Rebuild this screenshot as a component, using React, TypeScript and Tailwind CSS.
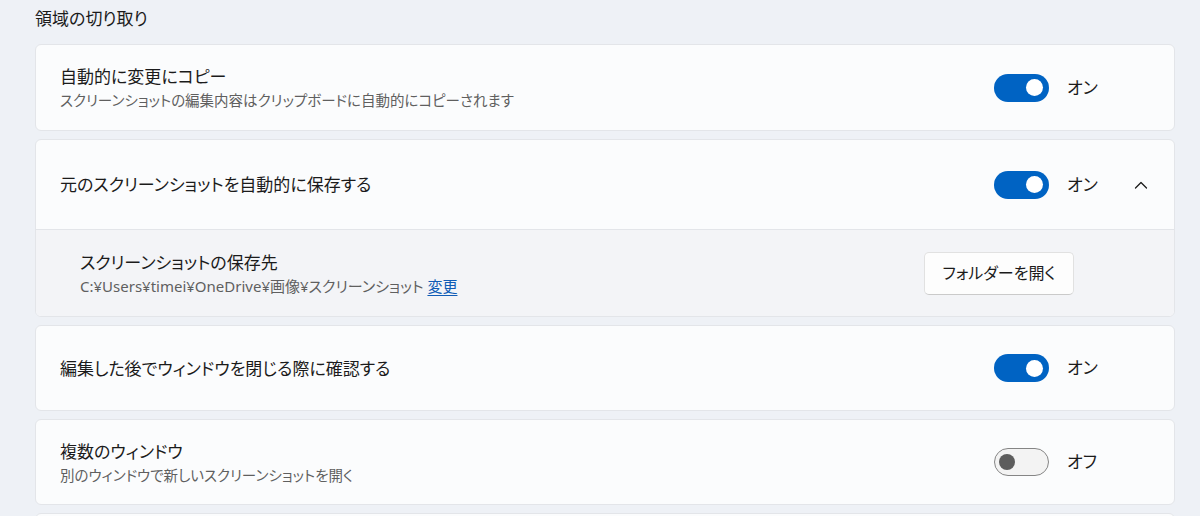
import React from "react";

const Toggle = ({ on }: { on: boolean }) =>
  on ? (
    <div className="w-[55px] h-[28px] rounded-full bg-[#0063c3] flex items-center justify-end pr-[6px] shrink-0">
      <div className="w-[17px] h-[17px] rounded-full bg-white" />
    </div>
  ) : (
    <div className="w-[55px] h-[28px] rounded-full bg-[#f3f3f3] border border-[#858585] flex items-center justify-start pl-[4px] shrink-0">
      <div className="w-[16px] h-[16px] rounded-full bg-[#5d5d5d]" />
    </div>
  );

const Chevron = () => (
  <svg width="14" height="8" viewBox="0 0 14 8" fill="none">
    <path d="M1.5 7L7 1.5L12.5 7" stroke="#1b1b1b" strokeWidth="1.3" strokeLinecap="round" strokeLinejoin="round" />
  </svg>
);

const Right = ({ on, chevron }: { on: boolean; chevron?: boolean }) => (
  <div className="flex items-center w-[180px] shrink-0">
    <Toggle on={on} />
    <div className="ml-[18px] w-[40px] text-[17px] text-[#1b1b1b]">{on ? "オン" : "オフ"}</div>
    <div className="w-[67px] pl-[27px] flex items-center">{chevron ? <Chevron /> : null}</div>
  </div>
);

const Row = ({
  title,
  sub,
  on,
  chevron,
  h,
}: {
  title: string;
  sub?: string;
  on: boolean;
  chevron?: boolean;
  h: string;
}) => (
  <div className={`flex items-center ${h}`}>
    <div className="flex-1 pl-[24px] flex flex-col">
      <div className="text-[17px] leading-[25px] text-[#1b1b1b]">{title}</div>
      {sub ? <div className="text-[14.5px] leading-[22px] text-[#5f5f5f]">{sub}</div> : null}
    </div>
    <Right on={on} chevron={chevron} />
  </div>
);

const card = "rounded-[6px] border border-[#e3e5e9] bg-[#fbfcfd] overflow-hidden";

export default function App() {
  return (
    <div className="w-[1200px] h-[516px] overflow-hidden bg-[#eef1f6] pl-[35px] pr-[25px] font-['Noto_Sans','Noto_Sans_CJK_JP',sans-serif] [font-feature-settings:'palt']">
      <div className="h-[44px] pt-[6px] text-[17px] leading-[26px] text-[#1b1b1b]">領域の切り取り</div>
      <div className="flex flex-col gap-[8px]">
        <div className={card}>
          <Row
            h="h-[85px]"
            title="自動的に変更にコピー"
            sub="スクリーンショットの編集内容はクリップボードに自動的にコピーされます"
            on
          />
        </div>
        <div className={card}>
          <Row h="h-[89px]" title="元のスクリーンショットを自動的に保存する" on chevron />
          <div className="h-[87px] border-t border-[#e3e5e9] bg-[#f3f4f7] flex items-center pl-[44px] pr-[100px]">
            <div className="flex-1 flex flex-col">
              <div className="text-[17px] leading-[25px] text-[#1b1b1b]">スクリーンショットの保存先</div>
              <div className="text-[15px] leading-[22px] text-[#5f5f5f]">
                C:¥Users¥timei¥OneDrive¥画像¥スクリーンショット{" "}
                <span className="text-[#0f5cb6] underline underline-offset-[3px]">変更</span>
              </div>
            </div>
            <div className="w-[150px] h-[43px] rounded-[5px] bg-[#fdfdfd] border border-[#e1e1e1] border-b-[#cacaca] flex items-center justify-center text-[16px] text-[#1b1b1b]">
              フォルダーを開く
            </div>
          </div>
        </div>
        <div className={card}>
          <Row h="h-[84px]" title="編集した後でウィンドウを閉じる際に確認する" on />
        </div>
        <div className={card}>
          <Row
            h="h-[84px]"
            title="複数のウィンドウ"
            sub="別のウィンドウで新しいスクリーンショットを開く"
            on={false}
          />
        </div>
        <div className={card}>
          <div className="h-[80px]" />
        </div>
      </div>
    </div>
  );
}
